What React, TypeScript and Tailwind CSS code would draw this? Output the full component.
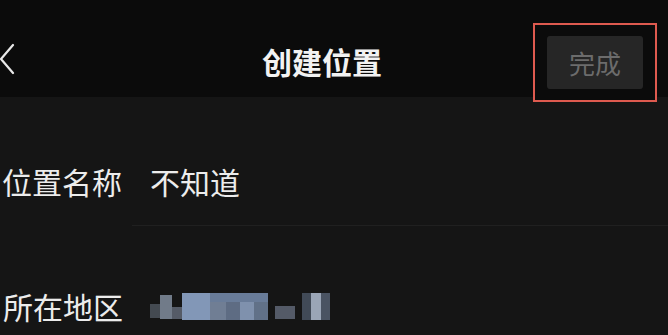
import React from "react";

const font = { fontFamily: '"Noto Sans CJK SC", "Noto Sans", sans-serif' };

function Mosaic() {
  return (
    <div className="flex items-end h-[28px] opacity-90">
      <div className="w-[10px] h-[14px] bg-[#4a5058] mb-[2px]" />
      <div className="w-[12px] h-[24px] bg-[#7c8796] mb-[1px]" />
      <div className="w-[10px] h-[12px] bg-[#5c6370] mb-[1px]" />
      <div className="w-[28px] h-[27px] bg-[#8ea6c9]" />
      <div className="flex flex-col w-[58px] h-[27px]">
        <div className="h-[9px] bg-[#7388a8]" />
        <div className="flex flex-1">
          <div className="w-[16px] bg-[#7a8aa2]" />
          <div className="w-[14px] bg-[#66768f]" />
          <div className="w-[14px] bg-[#8b9fbe]" />
          <div className="w-[14px] bg-[#6a7b95]" />
        </div>
      </div>
      <div className="w-[7px]" />
      <div className="w-[20px] h-[13px] bg-[#5b6270] mb-[1px]" />
      <div className="w-[7px]" />
      <div className="flex w-[28px] h-[27px] bg-[#56647a]">
        <div className="w-[9px] bg-[#46505f]" />
        <div className="w-[10px] bg-[#a9b5c8]" />
        <div className="w-[9px] bg-[#505a6b]" />
      </div>
    </div>
  );
}

export default function App() {
  return (
    <div className="w-[668px] h-[335px] bg-[#151515] overflow-hidden flex flex-col" style={font}>
      <div className="h-[97px] shrink-0 bg-[#0b0b0b] grid grid-cols-[262px_1fr_auto] items-start pr-[11px]">
        <div className="mt-[43px]">
          <svg width="16" height="32" viewBox="0 0 16 32">
            <path d="M13 2 L1 16 L13 30" fill="none" stroke="#e8e8e8" strokeWidth="2.2" strokeLinecap="round" strokeLinejoin="round" />
          </svg>
        </div>
        <div className="mt-[41px] text-[30px] leading-[40px] font-bold text-[#f2f2f2]">创建位置</div>
        <div className="relative z-10 mt-[23px] w-[124px] h-[79px] border-2 border-[#de5a4f] bg-[#0b0b0b] flex items-center pl-[12px]">
          <div className="w-[96px] h-[53px] bg-[#262626] rounded-[3px] flex items-center justify-center text-[26px] leading-none text-[#6c6c6c]">
            完成
          </div>
        </div>
      </div>
      <div className="flex flex-col">
        <div className="h-[128px] flex items-center pl-[2px] pt-[40px]">
          <div className="w-[148px] text-[30px] leading-none text-[#ececec]">位置名称</div>
          <div className="text-[30px] leading-none text-[#ececec]">不知道</div>
        </div>
        <div className="ml-[132px] h-[1px] bg-[#202020]" />
        <div className="h-[110px] flex items-center pl-[3px] pt-[50px]">
          <div className="w-[147px] text-[30px] leading-none text-[#ececec]">所在地区</div>
          <Mosaic />
        </div>
      </div>
    </div>
  );
}
